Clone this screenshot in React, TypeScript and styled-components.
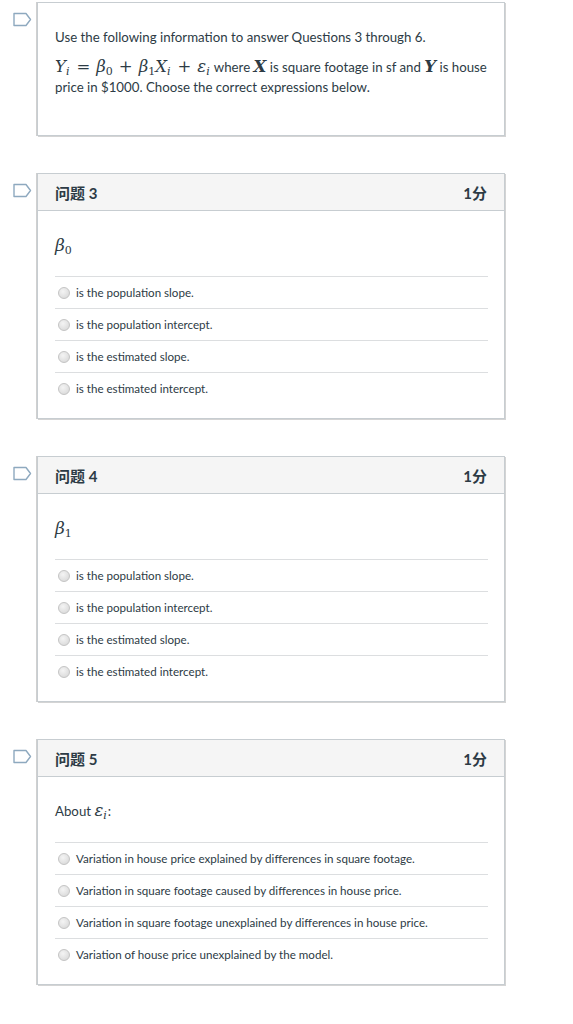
import React from "react";
import styled, { createGlobalStyle } from "styled-components";

const Global = createGlobalStyle`
  html, body { margin: 0; padding: 0; background: #ffffff; }
  body { font-family: Lato, "Noto Sans CJK SC", "Liberation Sans", sans-serif; color: #2d3b45; }
`;

const Page = styled.div`
  display: flex;
  flex-direction: column;
  gap: 37px;
  padding: 2px 0 20px 0;
  width: 573px;
`;

const Row = styled.div`
  display: flex;
  align-items: flex-start;
`;

const FlagCol = styled.div`
  width: 37px;
  flex: 0 0 37px;
  display: flex;
  justify-content: flex-start;
  padding: 10px 0 0 13px;
  box-sizing: border-box;
`;

const Card = styled.div`
  width: 468px;
  box-sizing: border-box;
  border: 1px solid #c7cdd1;
  box-shadow: 1px 1px 0 #d4d4d4, -1px 0 0 #d0d0d0;
  background: #fff;
`;

const Header = styled.div`
  height: 37px;
  box-sizing: border-box;
  background: #f5f5f5;
  border-bottom: 1px solid #c7cdd1;
  display: flex;
  align-items: center;
  justify-content: space-between;
  padding: 0 17px;
  font-weight: 700;
  font-size: 15px;
  color: #2d3b45;
`;

const Body = styled.div<{ $intro?: boolean }>`
  padding: ${(p) => (p.$intro ? "24px 17px 38px 17px" : "24px 16px 14px 17px")};
`;

const Para = styled.div`
  font-size: 13.25px;
  line-height: 20px;
  margin-bottom: 10px;
`;

const ParaMath = styled.div`
  font-size: 13.25px;
  line-height: 20px;
`;

const QText = styled.div`
  font-size: 13.25px;
  line-height: 20px;
  height: 20px;
  margin-bottom: 21px;
  display: flex;
  align-items: center;
`;

const Options = styled.div`
  display: flex;
  flex-direction: column;
`;

const Option = styled.label`
  height: 32px;
  box-sizing: border-box;
  border-top: 1px solid #dcdee0;
  display: flex;
  align-items: center;
  gap: 6px;
  padding-left: 3px;
  font-size: 11.6px;
  color: #2d3b45;
`;

const Radio = styled.span`
  width: 10px;
  height: 10px;
  border-radius: 50%;
  border: 1px solid #c4c4c4;
  background: radial-gradient(circle at 40% 35%, #f4f4f4 0%, #dedede 70%, #d2d2d2 100%);
  flex: 0 0 auto;
`;

const M = styled.span`
  font-family: "DejaVu Serif", "Liberation Serif", serif;
  font-style: italic;
  font-size: 16.5px;
  line-height: 20px;
`;

const MB = styled.span`
  font-family: "DejaVu Serif", "Liberation Serif", serif;
  font-style: italic;
  font-weight: 700;
  font-size: 16.5px;
  line-height: 20px;
`;

const Op = styled.span`
  font-family: "DejaVu Serif", "Liberation Serif", serif;
  font-size: 16.5px;
  line-height: 20px;
  margin: 0 6px;
`;

const Sub = styled.sub`
  font-family: "DejaVu Serif", "Liberation Serif", serif;
  font-style: normal;
  font-size: 11px;
  vertical-align: -3px;
  line-height: 0;
`;

const SubI = styled(Sub)`
  font-style: italic;
  margin-right: 1px;
`;

const Greek = styled.span`
  font-family: "DejaVu Serif", "Liberation Serif", serif;
  font-style: italic;
  font-size: 17px;
`;

const Flag = () => (
  <svg width="19" height="15" viewBox="0 0 19 15">
    <path d="M1 1.5 H13 L17.5 7.5 L13 13.5 H1 Z" fill="none" stroke="#8ea9bf" strokeWidth="1.4" strokeLinejoin="round" />
  </svg>
);

type Q = { num: number; stem: React.ReactNode; options: string[] };

const slopeOpts = [
  "is the population slope.",
  "is the population intercept.",
  "is the estimated slope.",
  "is the estimated intercept.",
];

const questions: Q[] = [
  {
    num: 3,
    stem: (
      <Greek>
        β<Sub>0</Sub>
      </Greek>
    ),
    options: slopeOpts,
  },
  {
    num: 4,
    stem: (
      <Greek>
        β<Sub>1</Sub>
      </Greek>
    ),
    options: slopeOpts,
  },
  {
    num: 5,
    stem: (
      <span>
        About{" "}
        <M>
          ε<SubI>i</SubI>
        </M>
        :
      </span>
    ),
    options: [
      "Variation in house price explained by differences in square footage.",
      "Variation in square footage caused by differences in house price.",
      "Variation in square footage unexplained by differences in house price.",
      "Variation of house price unexplained by the model.",
    ],
  },
];

export default function App() {
  return (
    <>
      <Global />
      <Page>
        <Row>
          <FlagCol>
            <Flag />
          </FlagCol>
          <Card>
            <Body $intro>
              <Para>Use the following information to answer Questions 3 through 6.</Para>
              <ParaMath>
                <M>
                  Y<SubI>i</SubI>
                </M>
                <Op>=</Op>
                <M>
                  β<Sub>0</Sub>
                </M>
                <Op>+</Op>
                <M>
                  β<Sub>1</Sub>X<SubI>i</SubI>
                </M>
                <Op>+</Op>
                <M>
                  ε<SubI>i</SubI>
                </M>{" "}
                where <MB>X</MB> is square footage in sf and <MB>Y</MB> is house price in $1000. Choose the
                correct expressions below.
              </ParaMath>
            </Body>
          </Card>
        </Row>
        {questions.map((q) => (
          <Row key={q.num}>
            <FlagCol>
              <Flag />
            </FlagCol>
            <Card>
              <Header>
                <span>问题 {q.num}</span>
                <span>1分</span>
              </Header>
              <Body>
                <QText>{q.stem}</QText>
                <Options>
                  {q.options.map((o) => (
                    <Option key={o}>
                      <Radio />
                      {o}
                    </Option>
                  ))}
                </Options>
              </Body>
            </Card>
          </Row>
        ))}
      </Page>
    </>
  );
}
